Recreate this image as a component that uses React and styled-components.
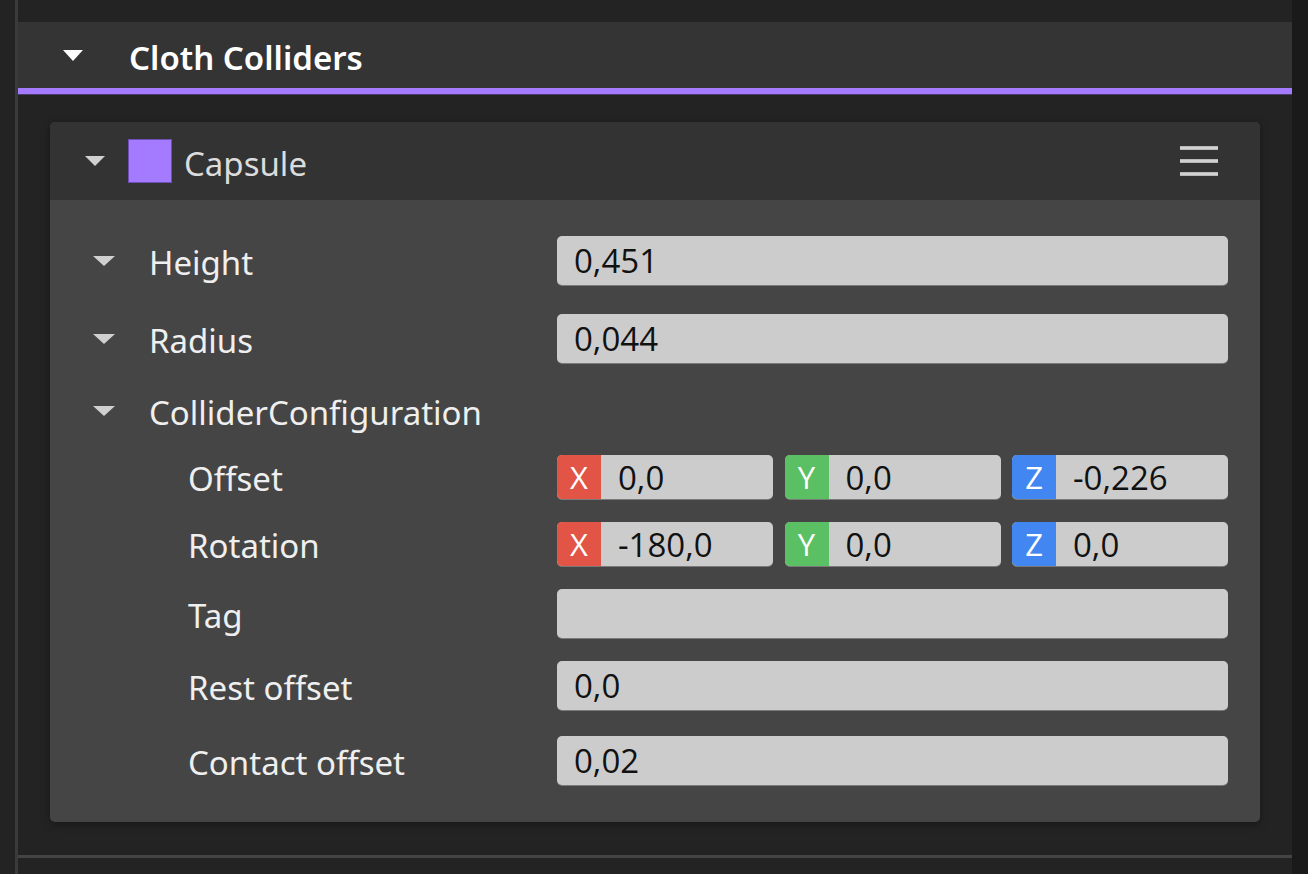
import React from 'react';
import styled, { createGlobalStyle } from 'styled-components';

const GlobalStyle = createGlobalStyle`
  html, body {
    margin: 0;
    padding: 0;
    background: #1a1a1a;
    font-family: "Noto Sans", "Open Sans", sans-serif;
    overflow: hidden;
  }
`;

const Layout = styled.div`
  display: flex;
  height: 874px;
`;

const Gutter = styled.div`
  width: 15px;
  background: #232323;
  border-right: 3px solid #3a3a3a;
`;

const Inspector = styled.div`
  width: 1274px;
  background: #232323;
  padding-top: 22px;
  display: flex;
  flex-direction: column;
`;

const SectionHeader = styled.div`
  height: 66px;
  background: #343434;
  border-bottom: 6px solid #a47bff;
  box-shadow: 0 1px 0 #4a3d6b;
  display: flex;
  align-items: center;
  padding-left: 45px;
  gap: 46px;
`;

const Caret = styled.span`
  width: 0;
  height: 0;
  border-left: ${({ $w }) => $w / 2}px solid transparent;
  border-right: ${({ $w }) => $w / 2}px solid transparent;
  border-top: ${({ $h }) => $h}px solid ${({ $color }) => $color || '#cfcfcf'};
  flex-shrink: 0;
`;

const Text = styled.span`
  display: inline-block;
  padding-top: ${({ $shift }) => $shift ?? 3}px;
`;

const SectionTitle = styled(Text)`
  color: #ffffff;
  font-size: 33px;
  font-weight: 600;
  line-height: 1;
`;

const Card = styled.div`
  margin: 28px 32px 33px;
  background: #454545;
  border-radius: 5px;
  overflow: hidden;
  box-shadow: 0 2px 8px rgba(0, 0, 0, 0.35);
`;

const CardHeader = styled.div`
  height: 78px;
  background: #333333;
  display: flex;
  align-items: center;
  padding: 0 42px 0 35px;
`;

const Swatch = styled.span`
  width: 42px;
  height: 42px;
  margin-left: 23px;
  background: #a47bff;
  border: 1px solid #6d4fb5;
  flex-shrink: 0;
`;

const CardTitle = styled(Text)`
  margin-left: 12px;
  color: #dcdcdc;
  font-size: 33px;
  line-height: 1;
  flex: 1;
`;

const MenuButton = styled.button`
  width: 38px;
  height: 30px;
  padding: 0;
  border: none;
  background: none;
  display: flex;
  flex-direction: column;
  justify-content: space-between;
  cursor: pointer;

  span {
    display: block;
    height: 2px;
    background: #d2d2d2;
    border-top: 1px solid #b8b8b8;
    border-bottom: 1px solid #b8b8b8;
    box-sizing: content-box;
  }
`;

const CardBody = styled.div`
  padding: 36px 32px 37px 43px;
  display: flex;
  flex-direction: column;
`;

const Row = styled.div`
  display: grid;
  grid-template-columns: 464px 1fr;
  align-items: center;
  height: ${({ $h }) => $h}px;
  margin-top: ${({ $gap }) => $gap || 0}px;
`;

const Label = styled.div`
  display: flex;
  align-items: center;
  gap: 34px;
  padding-left: ${({ $indent }) => ($indent ? 95 : 0)}px;
  color: #efefef;
  font-size: 33px;
  line-height: 1;
  white-space: nowrap;
`;

const Field = styled.div`
  height: ${({ $h }) => $h || 49}px;
  background: #cccccc;
  border-radius: 5px;
  box-shadow: 0 1px 0 #7a7a7a;
  display: flex;
  align-items: center;
  padding-left: 17px;
  color: #111111;
  font-family: "Open Sans", sans-serif;
  font-size: 33px;
  line-height: 1;
  overflow: hidden;
`;

const VectorGrid = styled.div`
  display: grid;
  grid-template-columns: repeat(3, 1fr);
  gap: 11.5px;
`;

const AxisField = styled(Field)`
  padding-left: 0;
`;

const Axis = styled.span`
  width: 44px;
  align-self: stretch;
  background: ${({ $color }) => $color};
  color: #ffffff;
  font-size: 31px;
  display: flex;
  align-items: center;
  justify-content: center;
  margin-right: 17px;
`;

const axisColors = { X: '#e25445', Y: '#5bbf63', Z: '#4287f1' };

const Vector = ({ values }) => (
  <VectorGrid>
    {['X', 'Y', 'Z'].map((axis, i) => (
      <AxisField key={axis} $h={44}>
        <Axis $color={axisColors[axis]}>{axis}</Axis>
        {values[i]}
      </AxisField>
    ))}
  </VectorGrid>
);

const Divider = styled.div`
  height: 3px;
  background: #444444;
`;

const RowCaret = () => <Caret $w={22} $h={10} $color="#d0d0d0" />;

export default function App() {
  return (
    <>
      <GlobalStyle />
      <Layout>
        <Gutter />
        <Inspector>
          <SectionHeader>
            <Caret $w={21} $h={11} $color="#ffffff" />
            <SectionTitle $shift={4}>Cloth Colliders</SectionTitle>
          </SectionHeader>

          <Card>
            <CardHeader>
              <Caret $w={20} $h={10} $color="#d0d0d0" />
              <Swatch />
              <CardTitle $shift={4}>Capsule</CardTitle>
              <MenuButton aria-label="menu">
                <span />
                <span />
                <span />
              </MenuButton>
            </CardHeader>

            <CardBody>
              <Row $h={49}>
                <Label><RowCaret /><Text>Height</Text></Label>
                <Field>0,451</Field>
              </Row>
              <Row $h={49} $gap={29}>
                <Label><RowCaret /><Text>Radius</Text></Label>
                <Field>0,044</Field>
              </Row>
              <Row $h={40} $gap={28}>
                <Label><RowCaret /><Text $shift={2}>ColliderConfiguration</Text></Label>
              </Row>
              <Row $h={44} $gap={24}>
                <Label $indent><Text>Offset</Text></Label>
                <Vector values={['0,0', '0,0', '-0,226']} />
              </Row>
              <Row $h={44} $gap={23}>
                <Label $indent><Text>Rotation</Text></Label>
                <Vector values={['-180,0', '0,0', '0,0']} />
              </Row>
              <Row $h={49} $gap={23}>
                <Label $indent><Text>Tag</Text></Label>
                <Field />
              </Row>
              <Row $h={49} $gap={23}>
                <Label $indent><Text>Rest offset</Text></Label>
                <Field>0,0</Field>
              </Row>
              <Row $h={49} $gap={26}>
                <Label $indent><Text>Contact offset</Text></Label>
                <Field>0,02</Field>
              </Row>
            </CardBody>
          </Card>

          <Divider />
        </Inspector>
      </Layout>
    </>
  );
}
